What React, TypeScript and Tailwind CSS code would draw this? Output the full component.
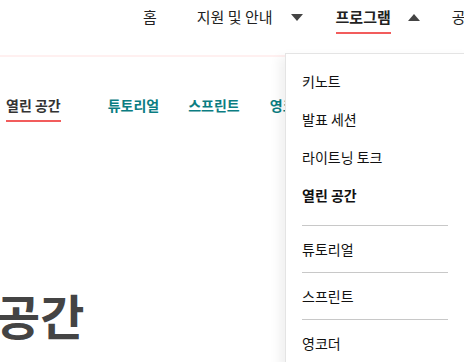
import React from "react";

const font = { fontFamily: '"Noto Sans CJK KR", "Noto Sans", sans-serif' };

function Caret({ up }: { up?: boolean }) {
  return (
    <svg width="12" height="7" viewBox="0 0 12 7" className="shrink-0">
      {up ? <path d="M0 7 L6 0 L12 7 Z" fill="#444" /> : <path d="M0 0 L12 0 L6 7 Z" fill="#444" />}
    </svg>
  );
}

export default function App() {
  const topGroup = ["키노트", "발표 세션", "라이트닝 토크"];
  const bottomGroup = ["튜토리얼", "스프린트", "영코더"];

  return (
    <div className="relative w-[464px] h-[362px] overflow-hidden bg-white text-[#222]" style={font}>
      {/* Top navigation */}
      <header className="h-[57px] border-b-2 border-[#fff0f0]">
        <nav className="flex items-start pl-[143px] pt-[6px] whitespace-nowrap text-[15px] leading-[22px]">
          <span>홈</span>
          <div className="ml-[40px] flex items-center gap-[18px]">
            <span>지원 및 안내</span>
            <Caret />
          </div>
          <div className="ml-[33px] flex items-start gap-[17px]">
            <span className="font-bold border-b-2 border-[#f25c5c] pb-[4px]">프로그램</span>
            <div className="h-[22px] flex items-center">
              <Caret up />
            </div>
          </div>
          <span className="ml-[32px]">공지</span>
        </nav>
      </header>

      {/* Sub navigation */}
      <div className="flex items-start pl-[6px] pt-[38px] whitespace-nowrap text-[14px] font-bold leading-[20px]">
        <span className="text-[#333] border-b-2 border-[#f25c5c] pb-[5px]">열린 공간</span>
        <span className="ml-[47px] text-[#0b7d82]">튜토리얼</span>
        <span className="ml-[29px] text-[#0b7d82]">스프린트</span>
        <span className="ml-[30px] text-[#0b7d82]">영코더</span>
      </div>

      {/* Page heading */}
      <h1 className="mt-[164px] -ml-[4px] text-[48px] leading-[56px] font-bold text-[#444] whitespace-nowrap">
        공간
      </h1>

      {/* Dropdown menu */}
      <div className="absolute left-[285px] top-[53px] w-[190px] bg-white border border-[#e4e4e4] shadow-[-6px_4px_10px_rgba(0,0,0,0.06)] pl-[16px] pr-[26px] pt-[8px] text-[14px] text-[#111]">
        {topGroup.map((t) => (
          <div key={t} className="h-[38px] flex items-center">
            {t}
          </div>
        ))}
        <div className="h-[38px] flex items-center font-bold">열린 공간</div>
        <div className="mt-[11px]">
          {bottomGroup.map((t) => (
            <div key={t} className="border-t border-[#c8c8c8] h-[47px] flex items-center">
              {t}
            </div>
          ))}
        </div>
      </div>
    </div>
  );
}
